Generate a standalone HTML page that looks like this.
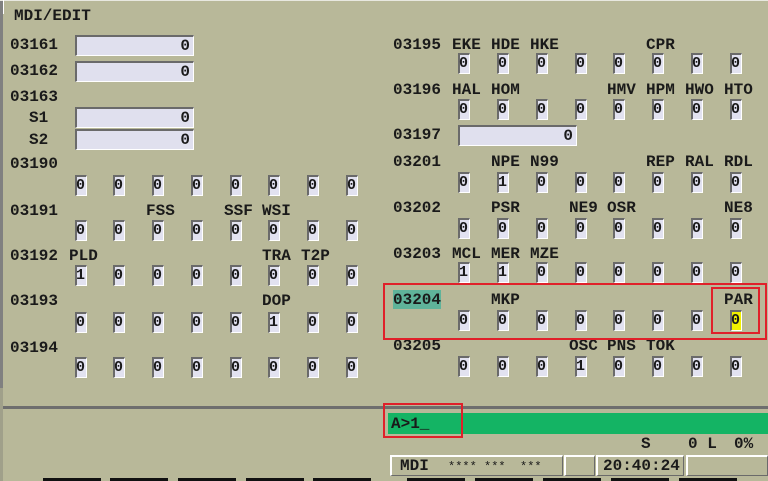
<!DOCTYPE html>
<html><head><meta charset="utf-8"><style>
*{margin:0;padding:0;box-sizing:border-box}
body{width:768px;height:481px;background:#b8b899;position:relative;overflow:hidden;font-family:"Liberation Mono","DejaVu Sans Mono",monospace;font-weight:bold;font-size:16px;color:#1a1a1a}
.t{position:absolute;line-height:16px;white-space:pre}
.b{position:absolute;width:12px;height:21px;background:#e2e2f0;border-top:2px solid #6a6a6a;border-left:2px solid #6a6a6a;border-right:1px solid #fff;border-bottom:1px solid #fff;font-size:15px;line-height:17px;text-indent:-1px}
.f{position:absolute;width:119px;height:21px;background:#e0e0ee;border-top:2px solid #6a6a6a;border-left:2px solid #6a6a6a;border-right:1px solid #fff;border-bottom:1px solid #fff;text-align:right;padding-right:3px;line-height:18px}
.r{position:absolute;border:2px solid #e0202a}
.s{position:absolute;height:21px;border-top:2px solid #fff;border-left:2px solid #fff;border-right:1px solid #6a6a6a;border-bottom:1px solid #6a6a6a;line-height:18px;white-space:pre}
</style></head><body>
<div style="position:absolute;left:0;top:0;width:3px;height:388px;background:#808080"></div>
<div style="position:absolute;left:0;top:0;width:768px;height:1px;background:#e8e8e0"></div>
<div style="position:absolute;left:3px;top:0;width:1px;height:14px;background:#fff"></div>
<div style="position:absolute;left:3px;top:406px;width:765px;height:3px;background:#6e6e6e"></div>
<div style="position:absolute;left:0;top:388px;width:3px;height:93px;background:#a0a08a"></div>
<div id="c"></div>
<div style="position:absolute;left:388px;top:413px;width:380px;height:21px;background:#14b464"></div>
<div class="t" style="left:391px;top:416px">A&gt;1_</div>
<div class="r" style="left:383px;top:403px;width:80px;height:35px"></div>
<div class="t" style="left:641px;top:436px">S</div>
<div class="t" style="left:688px;top:436px">0 L</div>
<div class="t" style="left:734px;top:436px">0%</div>
<div class="s" style="left:390px;top:455px;width:173px;padding-left:8px">MDI  <span style="font-size:12px;font-weight:normal">**** ***  ***</span></div>
<div class="s" style="left:564px;top:455px;width:31px"></div>
<div class="s" style="left:596px;top:455px;width:88px;padding-left:5px">20:40:24</div>
<div class="s" style="left:686px;top:455px;width:82px"></div>
<div style="position:absolute;top:478px;left:43px;width:58px;height:3px;background:#111"></div>
<div style="position:absolute;top:478px;left:110px;width:58px;height:3px;background:#111"></div>
<div style="position:absolute;top:478px;left:178px;width:58px;height:3px;background:#111"></div>
<div style="position:absolute;top:478px;left:246px;width:58px;height:3px;background:#111"></div>
<div style="position:absolute;top:478px;left:313px;width:58px;height:3px;background:#111"></div>
<div style="position:absolute;top:478px;left:407px;width:58px;height:3px;background:#111"></div>
<div style="position:absolute;top:478px;left:475px;width:58px;height:3px;background:#111"></div>
<div style="position:absolute;top:478px;left:543px;width:58px;height:3px;background:#111"></div>
<div style="position:absolute;top:478px;left:611px;width:58px;height:3px;background:#111"></div>
<div style="position:absolute;top:478px;left:679px;width:58px;height:3px;background:#111"></div>
<script>
var h='';
function T(x,y,s,st){h+='<div class="t" style="left:'+x+'px;top:'+(y-8)+'px;'+(st||'')+'">'+s+'</div>';}
function F(x,y,v){h+='<div class="f" style="left:'+x+'px;top:'+y+'px">'+v+'</div>';}
var L=[75,113,152,191,230,268,307,346],R=[458,497,536,575,613,652,691,730];
function B(cols,y,vals,yel){for(var i=0;i<8;i++){h+='<div class="b" style="left:'+cols[i]+'px;top:'+y+'px;'+(yel===i?'background:#f0f000;':'')+'">'+(vals[i]||'0')+'</div>';}}
function N(cols,y,names){for(var k in names)T(cols[k]-6,y,names[k]);}
T(14,16,'MDI/EDIT');
T(10,45,'03161');F(75,35,'0');
T(10,71,'03162');F(75,61,'0');
T(10,97,'03163');
T(29,118,'S1');F(75,107,'0');
T(29,140,'S2');F(75,129,'0');
T(10,164,'03190');B(L,175,[]);
T(10,211,'03191');N(L,211,{2:'FSS',4:'SSF',5:'WSI'});B(L,220,[]);
T(10,256,'03192');N(L,256,{0:'PLD',5:'TRA',6:'T2P'});B(L,265,['1']);
T(10,301,'03193');N(L,301,{5:'DOP'});B(L,312,[0,0,0,0,0,'1']);
T(10,348,'03194');B(L,357,[]);
T(393,45,'03195');N(R,45,{0:'EKE',1:'HDE',2:'HKE',5:'CPR'});B(R,53,[]);
T(393,90,'03196');N(R,90,{0:'HAL',1:'HOM',4:'HMV',5:'HPM',6:'HWO',7:'HTO'});B(R,99,[]);
T(393,135,'03197');F(458,125,'0');
T(393,162,'03201');N(R,162,{1:'NPE',2:'N99',5:'REP',6:'RAL',7:'RDL'});B(R,172,[0,'1']);
T(393,208,'03202');N(R,208,{1:'PSR',3:'NE9',4:'OSR',7:'NE8'});B(R,218,[]);
T(393,254,'03203');N(R,254,{0:'MCL',1:'MER',2:'MZE'});B(R,262,['1','1']);
h+='<div style="position:absolute;left:393px;top:290px;width:48px;height:19px;background:#5fb39a"></div>';
T(393,300,'03204');N(R,300,{1:'MKP',7:'PAR'});B(R,310,[],7);
T(393,346,'03205');N(R,346,{3:'OSC',4:'PNS',5:'TOK'});B(R,356,[0,0,0,'1']);
h+='<div class="r" style="left:383px;top:283px;width:384px;height:57px"></div>';
h+='<div class="r" style="left:711px;top:287px;width:49px;height:47px"></div>';
document.getElementById('c').innerHTML=h;
</script>
</body></html>
